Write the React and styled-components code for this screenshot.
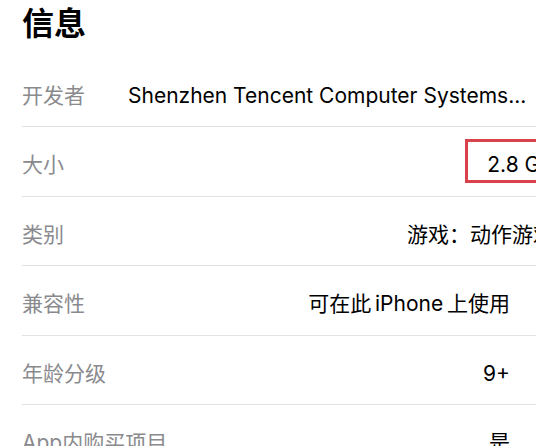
import React from 'react';
import styled, { createGlobalStyle } from 'styled-components';
import { ChevronDown } from 'lucide-react';

const info = [
  { label: '开发者', value: 'Shenzhen Tencent Computer Systems...', lead: true },
  { label: '大小', value: '2.8 GB', marked: true },
  { label: '类别', value: '游戏：动作游戏' },
  { label: '兼容性', value: '可在此\u2009iPhone\u2009上使用', more: true },
  { label: '年龄分级', value: '9+', more: true },
  { label: 'App内购买项目', value: '是', more: true },
];

const App = () => {
      return (
            <>
            <GlobalStyle />
            <Page>
                  <Title>信息</Title>
                  <List>
                        {info.map((item) => (
                              <Row key={item.label}>
                                    <Label>{item.label}</Label>
                                    <Value $lead={item.lead} $marked={item.marked}>{item.value}</Value>
                                    {item.more && (
                                          <More>
                                                <ChevronDown size={16} strokeWidth={2.4} />
                                          </More>
                                    )}
                              </Row>
                        ))}
                  </List>
            </Page>
            </>
      );
};

const GlobalStyle = createGlobalStyle`
      html, body {
            margin: 0;
            padding: 0;
            background: #ffffff;
            overflow: hidden;
      }
      body {
            font-family: Inter, "Noto Sans CJK SC", sans-serif;
            -webkit-font-smoothing: antialiased;
      }
`;

const Page = styled.div`
      width: 576px;
      box-sizing: border-box;
      padding: 0 22px;
`;

const Title = styled.h2`
      margin: 0;
      height: 57.5px;
      box-sizing: border-box;
      padding-top: 7px;
      font-size: 32px;
      line-height: 34px;
      font-weight: 700;
      color: #000000;
`;

const List = styled.div`
      display: flex;
      flex-direction: column;
`;

const Row = styled.div`
      display: flex;
      align-items: center;
      height: 69.5px;
      box-sizing: border-box;
      padding-top: 8px;
      border-bottom: 1px solid #e3e3e5;
`;

const Label = styled.span`
      flex-shrink: 0;
      font-size: 21px;
      line-height: 26px;
      color: #8a8a8e;
`;

const Value = styled.span`
      position: relative;
      margin-left: ${(p) => (p.$lead ? '43px' : 'auto')};
      font-size: 21px;
      line-height: 26px;
      color: #000000;
      white-space: nowrap;

      ${(p) => p.$marked && `
            &::after {
                  content: '';
                  position: absolute;
                  left: -22px;
                  right: -20px;
                  top: -13px;
                  bottom: -5px;
                  border: 3px solid #d8424b;
            }
      `}
`;

const More = styled.span`
      display: flex;
      align-items: center;
      margin-left: 28px;
      color: #c4c4c7;
`;

export default App;
